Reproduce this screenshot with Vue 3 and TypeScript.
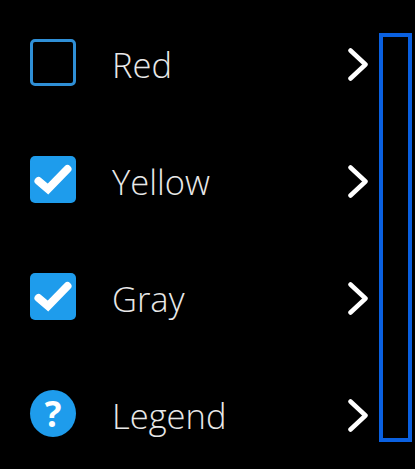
<script setup lang="ts">
type Kind = 'empty' | 'check' | 'help'
const rows: { label: string; kind: Kind }[] = [
  { label: 'Red', kind: 'empty' },
  { label: 'Yellow', kind: 'check' },
  { label: 'Gray', kind: 'check' },
  { label: 'Legend', kind: 'help' },
]
</script>

<template>
  <div class="screen">
    <ul class="list">
      <li v-for="row in rows" :key="row.label" class="row">
        <span v-if="row.kind === 'empty'" class="box box-empty"></span>
        <span v-else-if="row.kind === 'check'" class="box box-on">
          <svg viewBox="0 0 46 47" width="46" height="47" aria-hidden="true">
            <path d="M8.5 25 L18 33 L37.5 13" fill="none" stroke="#fff" stroke-width="8" stroke-linecap="round" stroke-linejoin="miter" />
          </svg>
        </span>
        <span v-else class="help">?</span>
        <span class="label">{{ row.label }}</span>
        <svg class="chev" viewBox="0 0 20 33" width="20" height="33" aria-hidden="true">
          <path d="M2.5 2.5 L17.5 16.5 L2.5 30.5" fill="none" stroke="#fff" stroke-width="4.5" stroke-linecap="round" stroke-linejoin="round" />
        </svg>
      </li>
    </ul>
    <div class="rail"></div>
  </div>
</template>

<style scoped>
.screen {
  width: 415px;
  height: 469px;
  background: #000;
  display: flex;
  align-items: flex-start;
  overflow: hidden;
  font-family: "Open Sans", sans-serif;
}
.list {
  list-style: none;
  margin: 0;
  padding: 4px 11px 0 30px;
  width: 379px;
  box-sizing: border-box;
  flex: none;
}
.row {
  height: 117px;
  display: flex;
  align-items: center;
}
.box {
  width: 46px;
  height: 47px;
  box-sizing: border-box;
  border-radius: 5px;
  flex: none;
  display: block;
}
.box svg {
  display: block;
}
.box-empty {
  border: 3px solid #2f8fd6;
}
.box-on {
  background: #1e9cec;
}
.help {
  width: 46px;
  height: 47px;
  border-radius: 50%;
  background: #1e9cec;
  color: #fff;
  flex: none;
  font-size: 35px;
  font-weight: 700;
  line-height: 47px;
  text-align: center;
}
.label {
  margin-left: 36px;
  padding-top: 4px;
  flex: 1;
  color: #e8e8e8;
  font-size: 34.5px;
  font-weight: 300;
  line-height: 47px;
}
.chev {
  flex: none;
  margin-top: 4px;
}
.rail {
  width: 33px;
  height: 409px;
  margin-top: 33px;
  box-sizing: border-box;
  border: 4px solid #0a60e0;
  flex: none;
}
</style>
<style>
html, body { background: #000; }
</style>
